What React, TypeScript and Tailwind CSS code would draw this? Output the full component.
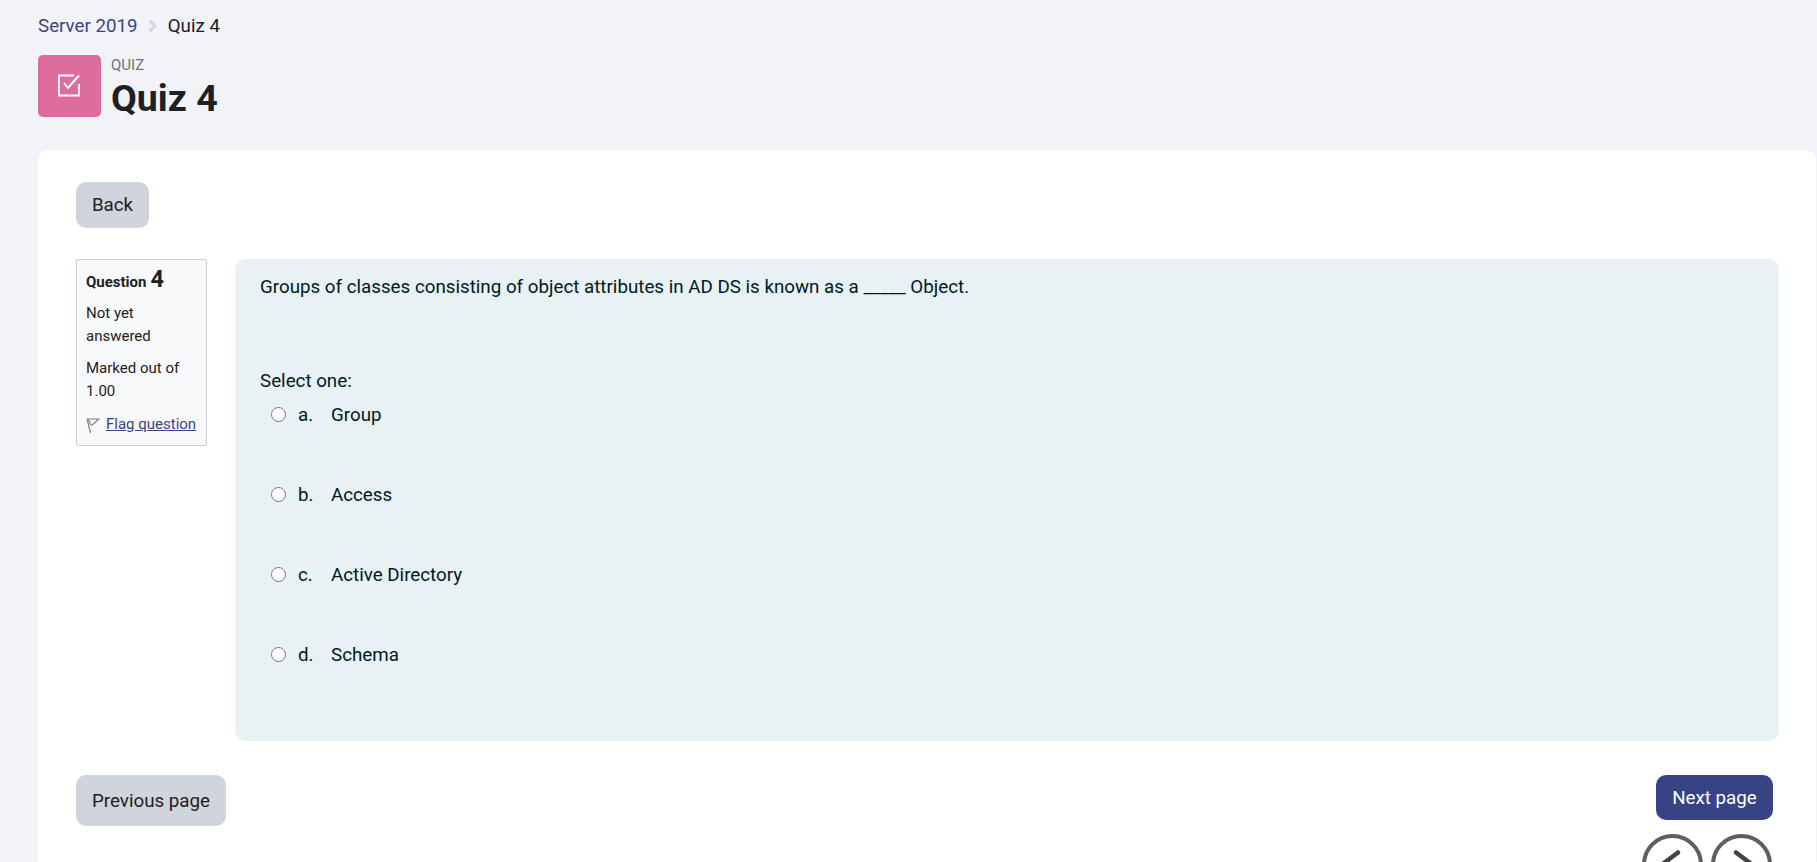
const font = { fontFamily: 'Roboto, sans-serif' };

function Option({ letter, text, last }: { letter: string; text: string; last?: boolean }) {
  return (
    <div className={`flex items-center h-[24px] pl-[11px] ${last ? '' : 'mb-[56px]'}`}>
      <span className="w-[15px] h-[15px] rounded-full border border-[#767676] bg-white shrink-0" />
      <span className="w-[33px] ml-[12px] shrink-0 pt-px">{letter}</span>
      <span className="pt-px">{text}</span>
    </div>
  );
}

export default function App() {
  return (
    <div style={font} className="h-[862px] overflow-hidden bg-[#f1f3f7] text-[#1d2125] text-[18.75px] leading-[26px]">
      <nav className="flex items-center pl-[38px] pt-[14px] h-[38px]">
        <span className="text-[#3b4585]">Server 2019</span>
        <svg width="12" height="14" viewBox="0 0 12 14" className="mx-[9px]">
          <path d="M2.500 1.500L8 7l-5.500 5.500" fill="none" stroke="#d3d7dd" strokeWidth="3" />
        </svg>
        <span>Quiz 4</span>
      </nav>
      <header className="flex pl-[38px] pt-[17px] h-[112px]">
        <div className="w-[63px] h-[62px] rounded-[5px] bg-[#dd6c9f] flex items-center justify-center">
          <svg width="24" height="24" viewBox="0 0 24 24" fill="none" stroke="#fff" className="mr-[1px] mb-[2px]">
            <path d="M22 11v11.500H2V2.500H17" strokeWidth="1.800" />
            <path d="M7 10l4 5L22 2.500" strokeWidth="2" />
          </svg>
        </div>
        <div className="ml-[10px]">
          <div className="text-[15px] leading-[20px] text-[#6f7479]">QUIZ</div>
          <h1 className="text-[37.5px] leading-[44px] font-bold mt-[1px]">Quiz 4</h1>
        </div>
      </header>
      <main className="ml-[38px] mr-px bg-white rounded-t-[10px] pl-[38px] pr-[38px] pt-[32px] h-[712px]">
        <button className="block h-[46px] w-[73px] rounded-[10px] bg-[#d0d4db]">Back</button>
        <section className="flex items-start mt-[31px]">
          <aside className="w-[131px] h-[187px] shrink-0 rounded-[2px] border border-[#c9ced6] bg-[#f8f9fa] pl-[9px] pr-[6px] pt-[5px] text-[15px] leading-[23px]">
            <div className="h-[29px] font-bold flex items-baseline">
              <span>Question</span>
              <span className="text-[23.440px] ml-[4px] leading-[29px]">4</span>
            </div>
            <div className="mt-[8px]">Not yet answered</div>
            <div className="mt-[9px]">Marked out of 1.00</div>
            <div className="mt-[10px] flex items-center">
              <svg width="14" height="16" viewBox="0 0 14 16" fill="none" stroke="#7d7d7d" strokeWidth="1.100" className="mr-[6px] mt-[2px] shrink-0">
                <path d="M1 1h12L8 5.500 5 7.500 M1 1l3.500 14 M2.500 1.500l2 5.500" />
              </svg>
              <span className="underline text-[#3b4585] whitespace-nowrap">Flag question</span>
            </div>
          </aside>
          <div className="ml-[28px] w-[1544px] shrink-0 h-[482px] rounded-[10px] bg-[#e8f1f4] text-[#001a1e] pl-[25px] pt-[15px]">
            <p>Groups of classes consisting of object attributes in AD DS is known as a _____ Object.</p>
            <p className="mt-[68px]">Select one:</p>
            <div className="mt-[8px]">
              <Option letter="a." text="Group" />
              <Option letter="b." text="Access" />
              <Option letter="c." text="Active Directory" />
              <Option letter="d." text="Schema" last />
            </div>
          </div>
        </section>
        <div className="flex items-start justify-between mt-[34px] pr-[5px]">
          <button className="h-[51px] w-[150px] rounded-[10px] bg-[#d0d4db]">Previous page</button>
          <div className="flex flex-col items-end">
            <button className="h-[45px] w-[117px] rounded-[10px] bg-[#374385] text-white">Next page</button>
            <div className="flex gap-[8px] mt-[14px] mr-[1px]">
              <svg width="61" height="61" viewBox="0 0 61 61" fill="none" strokeLinecap="round">
                <circle cx="30.500" cy="30.500" r="28.500" stroke="#5f5f5f" strokeWidth="4" />
                <path d="M36 18.500L20 30.500 36 42.500" stroke="#444" strokeWidth="4.500" />
              </svg>
              <svg width="61" height="61" viewBox="0 0 61 61" fill="none" strokeLinecap="round">
                <circle cx="30.500" cy="30.500" r="28.500" stroke="#5f5f5f" strokeWidth="4" />
                <path d="M25 18.500L41 30.500 25 42.500" stroke="#444" strokeWidth="4.500" />
              </svg>
            </div>
          </div>
        </div>
      </main>
    </div>
  );
}
